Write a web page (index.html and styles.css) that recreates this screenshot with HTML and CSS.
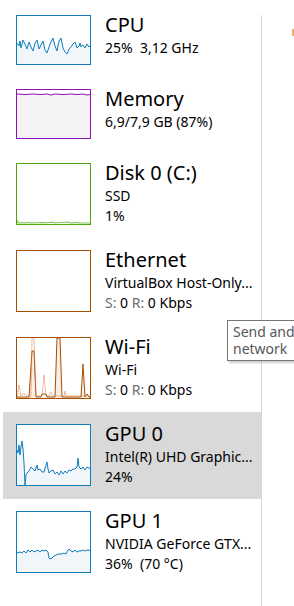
FILE: index.html
```html
<!DOCTYPE html>
<html lang="en">
<head>
    <meta charset="UTF-8">
    <meta name="viewport" content="width=device-width, initial-scale=1.0">
    <title>Performance</title>
    <link rel="stylesheet" href="styles.css">
</head>
<body>
    <div class="layout">
        <!-- Left list of devices -->
        <div class="device-list">

            <div class="device">
                <div class="graph graph-blue">
                    <svg viewBox="0 0 73 48" preserveAspectRatio="none">
                        <polygon class="fill-blue" points="0,27 2,30 3,25 4,32 6,24 8,28 10,33 12,26 14,31 16,35 18,27 20,24 22,33 24,29 26,25 28,34 30,37 32,31 34,26 35,24 36,22 38,30 40,35 42,25 44,22 46,32 48,36 50,38 52,33 54,31 56,28 58,26 60,32 62,30 63,27 64,31 66,29 68,32 70,28 72,31 73,30 73,48 0,48"/>
                        <polyline class="line-blue" points="0,27 2,30 3,25 4,32 6,24 8,28 10,33 12,26 14,31 16,35 18,27 20,24 22,33 24,29 26,25 28,34 30,37 32,31 34,26 35,24 36,22 38,30 40,35 42,25 44,22 46,32 48,36 50,38 52,33 54,31 56,28 58,26 60,32 62,30 63,27 64,31 66,29 68,32 70,28 72,31 73,30"/>
                    </svg>
                </div>
                <div class="info">
                    <div class="name">CPU</div>
                    <div class="detail">25%&nbsp; 3,12 GHz</div>
                </div>
            </div>

            <div class="device">
                <div class="graph graph-purple">
                    <svg viewBox="0 0 73 48" preserveAspectRatio="none">
                        <polygon class="fill-purple" points="0,4 8,4.5 16,4 24,4.5 30,4 34,5 38,4 46,4.5 54,4 60,4.5 66,4 70,5 73,4.5 73,48 0,48"/>
                        <polyline class="line-purple" points="0,4 8,4.5 16,4 24,4.5 30,4 34,5 38,4 46,4.5 54,4 60,4.5 66,4 70,5 73,4.5"/>
                    </svg>
                </div>
                <div class="info">
                    <div class="name">Memory</div>
                    <div class="detail">6,9/7,9 GB (87%)</div>
                </div>
            </div>

            <div class="device">
                <div class="graph graph-green tall">
                    <svg viewBox="0 0 73 60" preserveAspectRatio="none">
                        <polyline class="line-green" points="0,56 1,59 4,59 6,58.5 8,59 12,58.5 14,59 26,58.5 28,59 36,58 38,59 50,58 52,58.5 54,59 60,58.5 62,59 73,59"/>
                    </svg>
                </div>
                <div class="info">
                    <div class="name">Disk 0 (C:)</div>
                    <div class="detail">SSD</div>
                    <div class="detail">1%</div>
                </div>
            </div>

            <div class="device">
                <div class="graph graph-orange tall"></div>
                <div class="info">
                    <div class="name">Ethernet</div>
                    <div class="detail">VirtualBox Host-Only...</div>
                    <div class="detail"><span class="muted">S:</span> 0 <span class="muted">R:</span> 0 Kbps</div>
                </div>
            </div>

            <div class="device">
                <div class="graph graph-orange tall">
                    <svg viewBox="0 0 73 60" preserveAspectRatio="none">
                        <polygon class="fill-orange" points="0,59 12,59 15,13 17,13 19,59 38,59 40,0 43,0 45,59 64,59 66,26 68,59 73,59 73,60 0,60"/>
                        <polyline class="line-orange" points="0,59 12,59 15,13 17,13 19,59 24,59 25,56 29,56 30,59 38,59 40,0 43,0 45,59 64,59 66,26 68,59 70,56 72,59 73,59"/>
                        <polyline class="dots-orange" points="0,58 2,47 4,58 7,55 9,58 14,58 15,0 17,0 19,58 25,58 27,37 29,58 32,58 34,54 36,58 47,58 48,53 49,58 73,58"/>
                    </svg>
                </div>
                <div class="info">
                    <div class="name">Wi-Fi</div>
                    <div class="detail">Wi-Fi</div>
                    <div class="detail"><span class="muted">S:</span> 0 <span class="muted">R:</span> 0 Kbps</div>
                </div>
            </div>

            <div class="device selected">
                <div class="graph graph-blue tall">
                    <svg viewBox="0 0 73 60" preserveAspectRatio="none">
                        <polygon class="fill-blue" points="0,25 1,28 2,20 3,30 4,22 5,16 6,24 7,38 8,60 9,50 10,48 12,46 14,42 16,44 18,46 20,40 21,45 23,44 25,47 27,47 29,40 30,37 31,44 32,48 34,46 36,45 38,49 40,47 42,50 44,46 46,49 48,46 50,48 52,45 54,46 56,44 58,44 60,42 61,33 62,42 64,44 66,42 68,45 70,42 72,43 73,43 73,60 0,60"/>
                        <polyline class="line-blue" points="0,25 1,28 2,20 3,30 4,22 5,16 6,24 7,38 8,60 9,50 10,48 12,46 14,42 16,44 18,46 20,40 21,45 23,44 25,47 27,47 29,40 30,37 31,44 32,48 34,46 36,45 38,49 40,47 42,50 44,46 46,49 48,46 50,48 52,45 54,46 56,44 58,44 60,42 61,33 62,42 64,44 66,42 68,45 70,42 72,43 73,43"/>
                    </svg>
                </div>
                <div class="info">
                    <div class="name">GPU 0</div>
                    <div class="detail">Intel(R) UHD Graphic...</div>
                    <div class="detail">24%</div>
                </div>
            </div>

            <div class="device">
                <div class="graph graph-blue tall">
                    <svg viewBox="0 0 73 60" preserveAspectRatio="none">
                        <polygon class="fill-blue" points="0,41 3,40 5,41 7,39 9,41 11,38 13,40 15,38 17,40 19,39 21,38 23,40 25,38 27,39 29,38 31,40 32,46 33,47 35,46 37,44 39,43 41,42 43,42 45,42 47,41 49,42 51,38 52,37 54,39 56,40 58,38 60,40 62,39 64,39 66,38 68,39 70,38 72,38 73,39 73,60 0,60"/>
                        <polyline class="line-blue" points="0,41 3,40 5,41 7,39 9,41 11,38 13,40 15,38 17,40 19,39 21,38 23,40 25,38 27,39 29,38 31,40 32,46 33,47 35,46 37,44 39,43 41,42 43,42 45,42 47,41 49,42 51,38 52,37 54,39 56,40 58,38 60,40 62,39 64,39 66,38 68,39 70,38 72,38 73,39"/>
                    </svg>
                </div>
                <div class="info">
                    <div class="name">GPU 1</div>
                    <div class="detail">NVIDIA GeForce GTX...</div>
                    <div class="detail">36%&nbsp; (70 °C)</div>
                </div>
            </div>

        </div>

        <!-- Splitter between list and detail pane -->
        <div class="splitter"></div>

        <!-- Detail pane, mostly cut off -->
        <div class="detail-pane">
            <div class="pane-mark"></div>
        </div>
    </div>

    <!-- Tooltip over the Ethernet/Wi-Fi rows -->
    <div class="tooltip">Send and<br>network</div>
</body>
</html>
```

FILE: styles.css
```css
body {
    margin: 0;
    background-color: white;
    font-family: "Noto Sans", "Open Sans", sans-serif;
    color: #000;
    overflow: hidden;
}

.layout {
    display: flex;
    height: 606px;
}

/* Left column with all the devices */
.device-list {
    width: 258px;
    padding: 3px 0 0 3px;
    flex-shrink: 0;
}

.device {
    display: flex;
    align-items: flex-start;
    gap: 14px;
    padding: 12px 0 12px 13px;
}

.device.selected {
    background-color: #d9d9d9;
}

/* Small history graph */
.graph {
    width: 73px;
    height: 48px;
    flex-shrink: 0;
    border: 1px solid;
    background-color: white;
}

.graph.tall {
    height: 60px;
}

.graph svg {
    display: block;
    width: 100%;
    height: 100%;
}

.graph-blue { border-color: #117dbb; }
.graph-purple { border-color: #8b12ae; }
.graph-green { border-color: #4da60c; }
.graph-orange { border-color: #a74f01; }

.fill-blue { fill: #f1f6fa; }
.line-blue { fill: none; stroke: #117dbb; stroke-width: 1; }

.fill-purple { fill: #f4f2f4; }
.line-purple { fill: none; stroke: #8b12ae; stroke-width: 1; }

.line-green { fill: none; stroke: #7cc24a; stroke-width: 1.2; }

.fill-orange { fill: #fbeee3; }
.line-orange { fill: none; stroke: #a74f01; stroke-width: 1; }
.dots-orange { fill: none; stroke: #d9784a; stroke-width: 1; stroke-dasharray: 1 1; }

/* Text next to the graph */
.info {
    min-width: 0;
    flex: 1;
}

.name {
    font-size: 20px;
    line-height: 24px;
    margin-top: -2px;
    margin-bottom: 1px;
}

.detail {
    font-size: 14px;
    line-height: 20px;
    white-space: nowrap;
}

.muted {
    color: #6d6d6d;
}

.splitter {
    width: 1px;
    margin-top: 15px;
    background-color: #d9d9d9;
    flex-shrink: 0;
}

.detail-pane {
    flex: 1;
    display: flex;
    justify-content: flex-end;
    padding-top: 29px;
}

.pane-mark {
    width: 2px;
    height: 7px;
    background-color: #f3b05c;
}

/* Hover tooltip */
.tooltip {
    position: absolute;
    left: 227px;
    top: 320px;
    padding: 2px 8px 3px 5px;
    background-color: white;
    border: 1px solid #767676;
    box-shadow: 2px 2px 2px rgba(0, 0, 0, 0.2);
    color: #575757;
    font-size: 14px;
    line-height: 17px;
    white-space: nowrap;
}
```
